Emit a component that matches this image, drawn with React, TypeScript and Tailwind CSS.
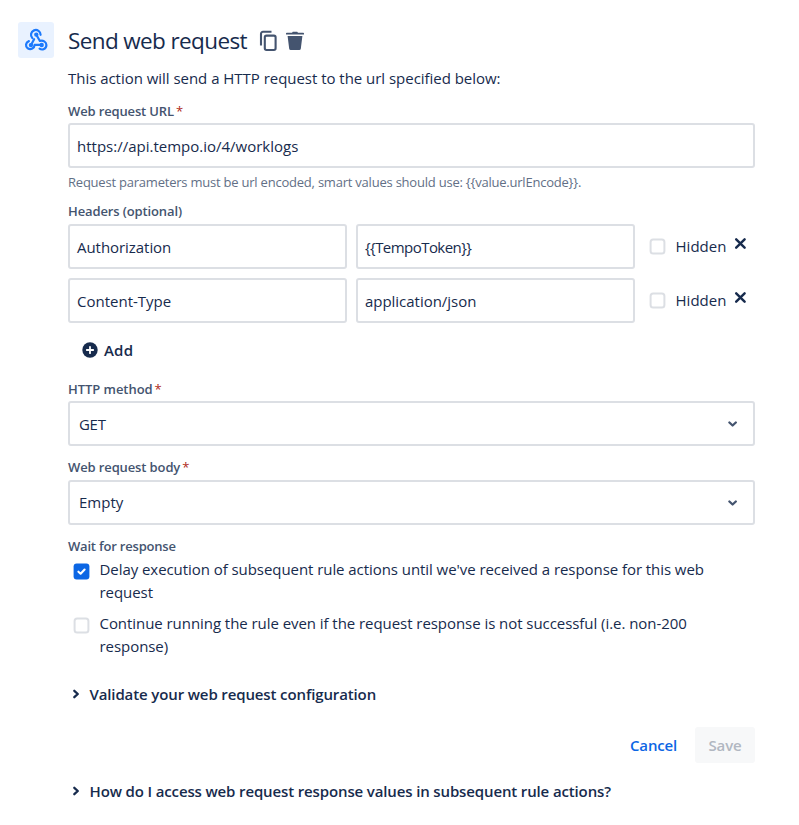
import React from "react";

const Label = ({ text, required, className }: { text: string; required?: boolean; className: string }) => (
  <div className={`flex h-5 items-center whitespace-nowrap text-[13px] font-semibold leading-5 text-[#44546f] ${className}`}>
    {text}
    {required && <span className="ml-[2px] font-normal tracking-normal text-[#ae2a19]">*</span>}
  </div>
);

const box = "flex h-[45px] items-center rounded-[3px] border-2 border-[#dcdfe4] bg-white whitespace-nowrap";

const Checkbox = ({ checked }: { checked?: boolean }) => (
  <svg viewBox="0 0 17 17" className="size-[17px] shrink-0" fill="none">
    {checked ? (
      <>
        <rect x="0.6" y="0.6" width="15.8" height="15.8" rx="3" fill="#0c66e4" />
        <path d="M5.4 8.7 7.6 10.7l4-4.2" stroke="#fff" strokeWidth="2.1" strokeLinecap="round" strokeLinejoin="round" />
      </>
    ) : (
      <rect x="1.6" y="1.6" width="13.8" height="13.8" rx="2.5" stroke="#dcdfe4" strokeWidth="2" />
    )}
  </svg>
);

const HeaderRow = ({ name, value, nameClass, valueClass }: { name: string; value: string; nameClass: string; valueClass: string }) => (
  <div className="flex">
    <div className={`${box} w-[279px] pl-[7px] pt-[2px]`}>
      <span className={nameClass}>{name}</span>
    </div>
    <div className={`${box} ml-[9px] w-[279px] pl-[7px] pt-[2px]`}>
      <span className={valueClass}>{value}</span>
    </div>
    <div className="ml-[14px] flex h-[45px] items-center">
      <Checkbox />
      <span className="ml-[9.5px] w-[51px] tracking-[0.02px]">Hidden</span>
      <svg viewBox="0 0 12 12" className="mb-[7px] ml-[7.5px] size-3" stroke="#172b4d" strokeWidth="2.4" strokeLinecap="round">
        <path d="M2.2 2.3 10.6 10.7M10.6 2.3 2.2 10.7" />
      </svg>
    </div>
  </div>
);

const Select = ({ value, className }: { value: string; className: string }) => (
  <div className={`${box} justify-between pl-[9px] pr-[15.5px]`}>
    <span className={className}>{value}</span>
    <svg viewBox="0 0 10 8" className="h-2 w-[10px]" fill="none" stroke="#44546f" strokeWidth="2.3" strokeLinecap="round" strokeLinejoin="round">
      <path d="m1.4 2.5 3.2 3 3.2-3" />
    </svg>
  </div>
);

const Disclosure = ({ text, className }: { text: string; className: string }) => (
  <div className="flex h-6 items-center pl-[4px] font-semibold">
    <svg viewBox="0 0 8 10" className="mb-px h-[10px] w-2" fill="none" stroke="#172b4d" strokeWidth="2.3" strokeLinecap="round" strokeLinejoin="round">
      <path d="M2.3 1.8 5.8 5 2.3 8.2" />
    </svg>
    <span className={`ml-[9.5px] whitespace-nowrap ${className}`}>{text}</span>
  </div>
);

export default function App() {
  return (
    <main className="flex h-[825px] w-[799px] items-start overflow-hidden bg-white pl-[18px] pt-[22px] font-['Open_Sans','Noto_Sans',sans-serif] text-[15px] leading-[23px] text-[#172b4d]">
      <div className="flex size-9 shrink-0 items-center justify-center rounded-[3px] bg-[#e9f2ff]">
        <svg viewBox="0 0 24 24" className="size-6" fill="none" stroke="#1d7afc" strokeWidth="2.2" strokeLinecap="round" strokeLinejoin="round">
          <path d="M8.3 10.1A4.8 4.8 0 1 1 16.6 6.8" />
          <path d="M12.3 6.8l3.6 6.2c3-1 6.4.8 6.5 4 0 4-4.2 5.6-6.8 3.6" />
          <path d="M6.9 17.2l3.2-6" />
          <path d="M4.9 13.1c-3.4 1.3-3.8 5.3-1.2 7.2 3.2 1.9 6.8-.2 6.9-3.4H18" />
          <circle cx="12.3" cy="6.6" r="1.1" />
          <circle cx="6.9" cy="17.1" r="1.1" />
          <circle cx="17.7" cy="17" r="1.1" />
        </svg>
      </div>
      <div className="ml-[14px] flex w-[687px] flex-col">
        <div className="flex h-[38px] items-center">
          <h1 className="w-[180px] whitespace-nowrap text-[22.5px] font-medium leading-7 tracking-[-0.62px]">Send web request</h1>
          <svg viewBox="0 0 18 22" className="ml-[11px] h-[22px] w-[18px]" fill="none" stroke="#44546f" strokeWidth="2.1">
            <path d="M2 15.5V3.8a2 2 0 0 1 2-2h8.5" />
            <rect x="5.8" y="5.6" width="10.8" height="14.4" rx="1.7" />
          </svg>
          <svg viewBox="0 0 18 20" className="ml-[9px] h-5 w-[18px]" fill="#44546f">
            <path d="M0 3.5V2.4Q0 1.7.8 1.7H6L6.8.8h4.4l.8.9h5.2q.8 0 .8.7v1.1zM1.6 5h14.8l-1.6 12.7q-.2 1.3-1.5 1.3H4.7q-1.3 0-1.5-1.3z" />
          </svg>
        </div>
        <p className="mt-[7px] h-[23px] whitespace-nowrap tracking-[-0.03px]">This action will send a HTTP request to the url specified below:</p>
        <Label text="Web request URL" required className="mt-[11px] tracking-[-0.14px]" />
        <div className={`${box} mt-[2px] pl-[7px] pt-[2px]`}>
          <span>https://api.tempo.io/4/worklogs</span>
        </div>
        <p className="mt-1 h-5 whitespace-nowrap text-[13px] leading-5 tracking-[-0.22px] text-[#626f86]">
          Request parameters must be url encoded, smart values should use: {"{{value.urlEncode}}"}.
        </p>
        <Label text="Headers (optional)" className="mt-[9px] tracking-[-0.12px]" />
        <div className="mt-[3px] flex flex-col gap-[9px]">
          <HeaderRow name="Authorization" value="{{TempoToken}}" nameClass="tracking-[-0.05px]" valueClass="tracking-[-0.55px]" />
          <HeaderRow name="Content-Type" value="application/json" nameClass="tracking-[0px]" valueClass="tracking-[-0.03px]" />
        </div>
        <div className="mt-[15px] flex h-6 items-center pl-[14px] font-semibold">
          <svg viewBox="0 0 16 16" className="size-4">
            <circle cx="8" cy="8" r="7.7" fill="#172b4d" />
            <path d="M8 4.8v6.4M4.8 8h6.4" stroke="#fff" strokeWidth="1.8" strokeLinecap="round" />
          </svg>
          <span className="ml-[6px] tracking-[0.2px]">Add</span>
        </div>
        <Label text="HTTP method" required className="mt-[17px] tracking-[-0.05px]" />
        <div className="mt-[2px]">
          <Select value="GET" className="mt-[2px] tracking-[-0.3px]" />
        </div>
        <Label text="Web request body" required className="mt-[11px] tracking-[-0.12px]" />
        <div className="mt-[3px]">
          <Select value="Empty" className="tracking-[0px]" />
        </div>
        <Label text="Wait for response" className="mt-[11px] tracking-[-0.2px]" />
        <div className="mt-[2px] flex pl-[5px]">
          <div className="mt-[5px] flex h-[17px]">
            <Checkbox checked />
          </div>
          <p className="ml-[9.5px] whitespace-nowrap tracking-[-0.06px]">
            Delay execution of subsequent rule actions until we've received a response for this web
            <br />
            request
          </p>
        </div>
        <div className="mt-2 flex pl-[5px]">
          <div className="mt-[5px] flex h-[17px]">
            <Checkbox />
          </div>
          <p className="ml-[9.5px] whitespace-nowrap tracking-[-0.055px]">
            Continue running the rule even if the request response is not successful (i.e. non-200
            <br />
            response)
          </p>
        </div>
        <div className="mt-6">
          <Disclosure text="Validate your web request configuration" className="tracking-[-0.125px]" />
        </div>
        <div className="mt-[21px] flex h-9 items-center justify-end font-semibold">
          <span className="mr-[18px] w-[47px] tracking-[-0.15px] text-[#0c66e4]">Cancel</span>
          <span className="flex h-9 w-[60px] items-center justify-center rounded-[3px] bg-[#f7f8f9] tracking-[-0.1px] text-[#b1b7c1]">Save</span>
        </div>
        <div className="mt-4">
          <Disclosure text="How do I access web request response values in subsequent rule actions?" className="tracking-[-0.135px]" />
        </div>
      </div>
    </main>
  );
}
